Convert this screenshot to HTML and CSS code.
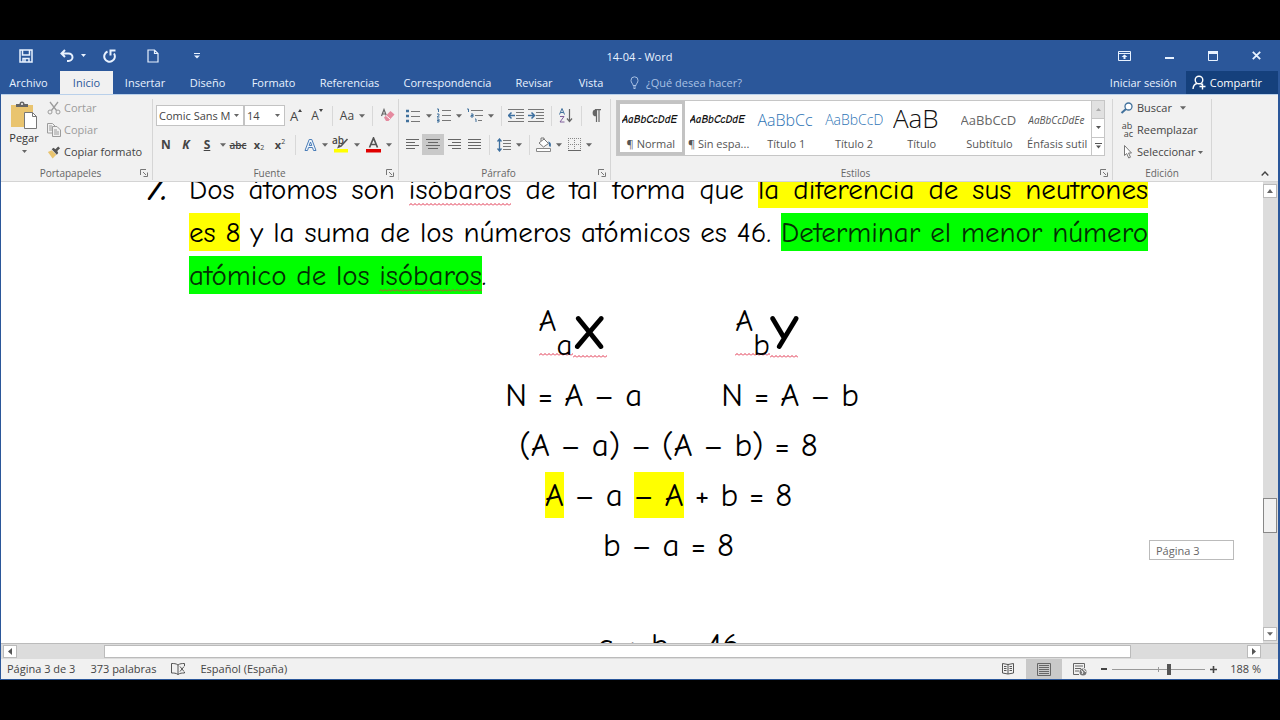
FILE: index.html
```html
<!DOCTYPE html>
<html lang="es">
<head>
<meta charset="utf-8">
<title>14-04 - Word</title>
<link rel="stylesheet" href="styles.css">
</head>
<body>
<svg class="defs" aria-hidden="true">
  <symbol id="car" viewBox="0 0 7 4"><path d="M0 0h7L3.5 4z" fill="currentColor"/></symbol>
  <symbol id="launch" viewBox="0 0 8 8"><path d="M.5 6V.5H6M3 3l3 3M7.500 3.500v4h-4" fill="none" stroke="#777"/></symbol>
</svg>
<div class="app">
  <header class="titlebar">
    <div class="quick">
      <button class="q-save" aria-label="Guardar"><svg width="14" height="14" viewBox="0 0 14 14"><path d="M1 1h12v12H1zM3.500 1v5h7V1M4 13V9.500h6V13M6 10v3" fill="none" stroke="currentColor" stroke-width="1.500"/></svg></button>
      <button class="q-undo" aria-label="Deshacer"><svg width="14" height="13" viewBox="0 0 14 13"><path d="M5 1L1.500 4.500 5 8M2 4.500h6.500a4 3.700 0 0 1 0 7.400H7" fill="none" stroke="currentColor" stroke-width="2"/></svg></button>
      <button class="q-car" aria-label="Opciones de deshacer"><svg width="5" height="3"><use href="#car"/></svg></button>
      <button class="q-redo" aria-label="Repetir"><svg width="14" height="14" viewBox="0 0 14 14"><path d="M4.500 2.500A5.300 5.300 0 1 0 11 4.500M7.500 6.500V1.500h5" fill="none" stroke="currentColor" stroke-width="2"/></svg></button>
      <button class="q-new" aria-label="Nuevo"><svg width="12" height="14" viewBox="0 0 12 14"><path d="M1 1h6.500L11 4.500V13H1zM7.500 1v3.500H11" fill="none" stroke="currentColor" stroke-width="1.200"/></svg></button>
      <button class="q-more" aria-label="Personalizar"><svg width="6" height="6" viewBox="0 0 6 6"><path d="M0 .5h6" stroke="currentColor"/><path d="M0 2.500h6L3 5.500z" fill="currentColor"/></svg></button>
    </div>
    <h1 class="title">14-04 - Word</h1>
    <div class="winbtns">
      <button aria-label="Opciones de la cinta"><svg width="13" height="10" viewBox="0 0 13 10"><path d="M.5.5h12v9H.5zM.5 2.500h12" fill="none" stroke="currentColor"/><path d="M6.500 3.500L9.500 6h-2v2h-2V6h-2z" fill="currentColor"/></svg></button>
      <button aria-label="Minimizar"><svg width="9" height="10" viewBox="0 0 9 10"><path d="M0 7h9" stroke="currentColor" stroke-width="2"/></svg></button>
      <button aria-label="Maximizar"><svg width="10" height="10" viewBox="0 0 10 10"><path d="M.5.5h9v9h-9z" fill="none" stroke="currentColor"/><path d="M0 0h10v3H0z" fill="currentColor"/></svg></button>
      <button aria-label="Cerrar"><svg width="9" height="9" viewBox="0 0 9 9"><path d="M.8.8l7.400 7.400M8.200.8L.8 8.200" stroke="currentColor" stroke-width="1.800"/></svg></button>
    </div>
  </header>
  <nav class="tabs">
    <button class="tab t-file">Archivo</button><button class="tab active">Inicio</button><button class="tab t-ins">Insertar</button><button class="tab t-dis">Diseño</button><button class="tab t-for">Formato</button><button class="tab t-ref">Referencias</button><button class="tab t-cor">Correspondencia</button><button class="tab t-rev">Revisar</button><button class="tab t-vis">Vista</button>
    <button class="tell"><svg width="9" height="13" viewBox="0 0 9 13"><path d="M3 9.500C3 7.500 1 7 1 4.300a3.500 3.500 0 0 1 7 0C8 7 6 7.500 6 9.500zM3 11h3M3.500 12.500h2" fill="none" stroke="currentColor"/></svg>¿Qué desea hacer?</button>
    <button class="signin">Iniciar sesión</button>
    <button class="share"><svg width="14" height="15" viewBox="0 0 14 15"><circle cx="7" cy="5" r="3.800" fill="none" stroke="currentColor" stroke-width="1.400"/><path d="M1 14c.3-3.500 2-5 4-5.500M8.500 8.500l1.500 1M10.500 8.500v6M7.500 11.500h6" fill="none" stroke="currentColor" stroke-width="1.400"/></svg>Compartir</button>
  </nav>

  <section class="ribbon">
    <div class="group g-clip">
      <div class="gbody">
        <button class="paste"><svg width="28" height="29" viewBox="0 0 28 29"><path d="M1 4h22v22H1z" fill="#e9c46f"/><path d="M6 6V3h3.500a2.500 2.500 0 0 1 5 0H18v3z" fill="#666"/><circle cx="12" cy="3" r="1" fill="#fff"/><path d="M14.500 11.500h8l4 4v12h-12z" fill="#fff" stroke="#777"/><path d="M22.500 11.500v4h4" fill="none" stroke="#777"/></svg>Pegar<svg class="car" width="5" height="3"><use href="#car"/></svg></button>
        <div class="list">
          <button class="off"><svg width="14" height="14" viewBox="0 0 14 14"><path d="M3 1l6.500 8.500M11 1L4.500 9.500" stroke="currentColor" stroke-width="1.300"/><circle cx="3" cy="11" r="2" fill="none" stroke="currentColor"/><circle cx="11" cy="11" r="2" fill="none" stroke="currentColor"/></svg>Cortar</button>
          <button class="off"><svg width="14" height="14" viewBox="0 0 14 14"><path d="M5 10H.5V.5h5L8 3M2 3h3M2 5h3M2 7h3M5.500 3.500H10L13.500 7v6.500h-8zM7 7h3M7 9h5M7 11h5" fill="none" stroke="currentColor"/></svg>Copiar</button>
          <button><svg width="14" height="14" viewBox="0 0 15 14"><path d="M1 7l4-2 5 5-4 4z" fill="#e9c46f"/><path d="M5 4l2-1.500 2 1.500L12 1l2 2-3 3 1 2-1.500 2z" fill="#555"/></svg>Copiar formato</button>
        </div>
      </div>
      <div class="glabel"><span>Portapapeles</span><button aria-label="Más opciones de portapapeles"><svg width="8" height="8"><use href="#launch"/></svg></button></div>
    </div>

    <div class="group g-font">
      <div class="gbody rows">
        <div class="row">
          <span class="combo c-font"><select aria-label="Fuente"><option>Comic Sans M</option></select><svg width="5" height="3"><use href="#car"/></svg></span>
          <span class="combo c-size"><select aria-label="Tamaño de fuente"><option>14</option></select><svg width="5" height="3"><use href="#car"/></svg></span>
          <button class="ib wide grow" aria-label="Aumentar tamaño"><b>A</b><svg width="4" height="3" viewBox="0 0 4 3"><path d="M0 3h4L2 0z" fill="#444"/></svg></button>
          <button class="ib grow" aria-label="Disminuir tamaño"><small>A</small><svg width="4" height="3" viewBox="0 0 4 3"><path d="M0 0h4L2 3z" fill="#444"/></svg></button>
          <i class="sep"></i>
          <button class="ib case">Aa</button><button class="cb" aria-label="Opciones de mayúsculas"><svg width="6" height="4"><use href="#car"/></svg></button>
          <i class="sep"></i>
          <button class="ib" aria-label="Borrar formato"><svg width="15" height="15" viewBox="0 0 15 15"><path d="M1.500 8L4 1.500 6.500 8M2.500 6h3" fill="none" stroke="#666" stroke-width="1.200"/><path d="M4 9.500l6.500-6.500 4 3.500-6 6.500H6z" fill="#e58a9f"/><path d="M6 7.500l4 3.500" stroke="#fff"/></svg></button>
        </div>
        <div class="row">
          <button class="ib bius"><b>N</b></button><button class="ib bius"><b><i>K</i></b></button><button class="ib wide bius"><b><u>S</u></b></button><button class="cb" aria-label="Opciones de subrayado"><svg width="6" height="4"><use href="#car"/></svg></button>
          <button class="ib strike"><s>abc</s></button><button class="ib wide script"><b>x</b><sub>2</sub></button><button class="ib script"><b>x</b><sup>2</sup></button><i class="sep"></i>
          <button class="ib" aria-label="Efectos de texto"><svg width="13" height="14" viewBox="0 0 13 14"><path d="M1 12.500L5.200 1.500h2.600L12 12.500H9.500l-1-3h-4l-1 3zM5.200 7.500h2.600L6.500 4z" fill="#eef4fb" stroke="#4a7db8"/></svg></button><button class="cb" aria-label="Opciones de efectos"><svg width="6" height="4"><use href="#car"/></svg></button>
          <button class="ib wide pen" aria-label="Color de resaltado"><span>ab</span><svg width="16" height="16" viewBox="0 0 16 16"><path d="M14.500 2L8 9l-2.500 1 1-2.500" fill="none" stroke="#555" stroke-width="1.600"/><path d="M1 12h14v3.500H1z" fill="#ff0"/></svg></button><button class="cb" aria-label="Opciones de resaltado"><svg width="6" height="4"><use href="#car"/></svg></button>
          <button class="ib wide" aria-label="Color de fuente"><svg width="15" height="16" viewBox="0 0 15 16"><path d="M3.500 10.500l4-9.500 4 9.500M5 7.500h5" fill="none" stroke="#555" stroke-width="1.700"/><path d="M0 12h15v3.500H0z" fill="#e00000"/></svg></button><button class="cb" aria-label="Opciones de color"><svg width="6" height="4"><use href="#car"/></svg></button>
        </div>
      </div>
      <div class="glabel"><span>Fuente</span><button aria-label="Más opciones de fuente"><svg width="8" height="8"><use href="#launch"/></svg></button></div>
    </div>

    <div class="group g-par">
      <div class="gbody rows">
        <div class="row">
          <button class="ib wide" aria-label="Viñetas"><svg width="14" height="14" viewBox="0 0 14 14"><path d="M0 2h3M0 7h3M0 12h3" stroke="#41719c" stroke-width="2.500"/><path d="M5 2.500h9M5 7.500h9M5 12.500h9" stroke="#777"/></svg></button><button class="cb" aria-label="Opciones de viñetas"><svg width="6" height="4"><use href="#car"/></svg></button>
          <button class="ib" aria-label="Numeración"><svg width="14" height="15" viewBox="0 0 14 15"><path d="M0 1h1.500v3M0 6h2v1.500L0 9h2.500M0 11h2v3H0M0 12.500h2" fill="none" stroke="#41719c"/><path d="M5 2.500h9M5 7.500h9M5 12.500h9" stroke="#777"/></svg></button><button class="cb" aria-label="Opciones de numeración"><svg width="6" height="4"><use href="#car"/></svg></button>
          <button class="ib wide" aria-label="Lista multinivel"><svg width="16" height="15" viewBox="0 0 16 15"><path d="M0 1h1.500v3M4 6h2v3H4v-1.500h2M8 11h1v3" fill="none" stroke="#41719c"/><path d="M4 2.500h12M8 7.500h8M11 12.500h4" stroke="#777"/></svg></button><button class="cb" aria-label="Opciones multinivel"><svg width="6" height="4"><use href="#car"/></svg></button>
          <i class="sep"></i>
          <button class="ib" aria-label="Disminuir sangría"><svg width="16" height="13" viewBox="0 0 16 13"><path d="M0 .5h16M8 3.500h8M8 6.500h8M8 9.500h8M0 12.500h16" stroke="#777"/><path d="M0 6.500h7M3.500 3.500l-3 3 3 3" fill="none" stroke="#3d6f9f" stroke-width="1.500"/></svg></button>
          <button class="ib" aria-label="Aumentar sangría"><svg width="16" height="13" viewBox="0 0 16 13"><path d="M0 .5h16M8 3.500h8M8 6.500h8M8 9.500h8M0 12.500h16" stroke="#777"/><path d="M0 6.500h7M3.500 3.500l3 3-3 3" fill="none" stroke="#3d6f9f" stroke-width="1.500"/></svg></button>
          <i class="sep"></i>
          <button class="ib" aria-label="Ordenar"><svg width="14" height="15" viewBox="0 0 14 15"><path d="M.5 6.500L3 .5l2.500 6M1.500 4.500h3" fill="none" stroke="#41719c"/><path d="M1 8.500h4L1 14h4.500" fill="none" stroke="#80609c"/><path d="M10.500 1v12M8 10.500l2.500 3 2.500-3" fill="none" stroke="#666" stroke-width="1.200"/></svg></button>
          <i class="sep"></i>
          <button class="ib" aria-label="Mostrar todo"><svg width="10" height="13" viewBox="0 0 10 13"><path d="M5 .5a3.300 3.300 0 0 0 0 6.800z" fill="#666"/><path d="M4 .7h6M5.500 1v12M8 1v12" stroke="#666" stroke-width="1.200"/></svg></button>
        </div>
        <div class="row">
          <button class="ib" aria-label="Alinear a la izquierda"><svg width="13" height="11" viewBox="0 0 13 11"><path d="M0 .5h13M0 3.500h9M0 6.500h13M0 9.500h9" stroke="#666"/></svg></button>
          <button class="ib wide on" aria-label="Centrar"><svg width="14" height="11" viewBox="0 0 14 11"><path d="M0 .5h14M2 3.500h10M0 6.500h14M2 9.500h10" stroke="#666"/></svg></button>
          <button class="ib" aria-label="Alinear a la derecha"><svg width="13" height="11" viewBox="0 0 13 11"><path d="M0 .5h13M4 3.500h9M0 6.500h13M4 9.500h9" stroke="#666"/></svg></button>
          <button class="ib" aria-label="Justificar"><svg width="13" height="11" viewBox="0 0 13 11"><path d="M0 .5h13M0 3.500h13M0 6.500h13M0 9.500h13" stroke="#666"/></svg></button>
          <i class="sep"></i>
          <button class="ib" aria-label="Espaciado"><svg width="14" height="14" viewBox="0 0 14 14"><path d="M2.500 1v12M.5 3.500L2.500 1l2 2.500M.5 10.500l2 2.500 2-2.500" fill="none" stroke="#3d6f9f" stroke-width="1.300"/><path d="M6 2.500h8M6 5.500h8M6 8.500h8M6 11.500h8" stroke="#777"/></svg></button><button class="cb" aria-label="Opciones de espaciado"><svg width="6" height="4"><use href="#car"/></svg></button>
          <i class="sep"></i>
          <button class="ib" aria-label="Sombreado"><svg width="16" height="15" viewBox="0 0 16 15"><path d="M3 6l5-4 4.500 4.500L7.500 10zM5 4V1h3v2" fill="#fff" stroke="#777"/><path d="M12 4.500c3 .5 3.500 3 2.500 5.500-1.500-.5-2-2-1.500-3.500z" fill="#3d6f9f"/><path d="M.5 11.500h14v3H.5z" fill="#fff" stroke="#888"/></svg></button><button class="cb" aria-label="Opciones de sombreado"><svg width="6" height="4"><use href="#car"/></svg></button>
          <button class="ib" aria-label="Bordes"><svg width="13" height="13" viewBox="0 0 13 13"><path d="M0 .5h13M0 6.500h13M.5 0v13M6.500 0v13M12.500 0v13" stroke="#888" stroke-dasharray="1 1"/><path d="M0 12.500h13" stroke="#666"/></svg></button><button class="cb" aria-label="Opciones de bordes"><svg width="6" height="4"><use href="#car"/></svg></button>
        </div>
      </div>
      <div class="glabel"><span>Párrafo</span><button aria-label="Más opciones de párrafo"><svg width="8" height="8"><use href="#launch"/></svg></button></div>
    </div>

    <div class="group g-sty">
      <div class="gbody">
        <div class="gallery">
          <button class="style sel"><span class="sample comic">AaBbCcDdE</span><span>¶ Normal</span></button>
          <button class="style"><span class="sample comic">AaBbCcDdE</span><span>¶ Sin espa...</span></button>
          <button class="style"><span class="sample h1s">AaBbCc</span><span>Título 1</span></button>
          <button class="style"><span class="sample h2s">AaBbCcD</span><span>Título 2</span></button>
          <button class="style"><span class="sample tts">AaB</span><span>Título</span></button>
          <button class="style"><span class="sample sub">AaBbCcD</span><span>Subtítulo</span></button>
          <button class="style"><span class="sample emp">AaBbCcDdEe</span><span>Énfasis sutil</span></button>
          <div class="gscroll">
            <button class="dis" aria-label="Subir"><svg width="5" height="3" viewBox="0 0 5 3"><path d="M0 3h5L2.500 0z" fill="#aaa"/></svg></button>
            <button aria-label="Bajar"><svg width="5" height="3"><use href="#car"/></svg></button>
            <button aria-label="Más estilos"><svg width="7" height="6" viewBox="0 0 7 6"><path d="M0 .5h7" stroke="#555"/><path d="M1 2.500h5L3.500 5.500z" fill="#555"/></svg></button>
          </div>
        </div>
      </div>
      <div class="glabel"><span>Estilos</span><button aria-label="Más opciones de estilos"><svg width="8" height="8"><use href="#launch"/></svg></button></div>
    </div>

    <div class="group g-edit">
      <div class="gbody">
        <div class="list">
          <button><svg width="14" height="12" viewBox="0 0 14 12"><circle cx="8.500" cy="4.500" r="3.500" fill="#fff" stroke="#41719c" stroke-width="1.300"/><path d="M6 7l-4.500 4" stroke="#41719c" stroke-width="2"/></svg>Buscar<svg class="car gap" width="6" height="4"><use href="#car"/></svg></button>
          <button><span class="abac"><span>ab</span><span>ac</span></span>Reemplazar</button>
          <button><svg width="14" height="14" viewBox="0 0 14 14"><path d="M4.500.5v10l2.200-2 2 4.500 1.800-.8-2-4.200h3z" fill="#fff" stroke="#777"/></svg>Seleccionar<svg class="car" width="5" height="3"><use href="#car"/></svg></button>
        </div>
      </div>
      <div class="glabel"><span>Edición</span></div>
    </div>
    <button class="collapse" aria-label="Contraer la cinta"><svg width="8" height="5" viewBox="0 0 8 5"><path d="M.7 4.500L4 1l3.300 3.500" fill="none" stroke="#444" stroke-width="1.400"/></svg></button>
  </section>

  <main class="work">
    <article class="page">
      <div class="problem">
        <div class="num">7.</div>
        <div class="statement">
          <p class="just">Dos átomos son <span class="sp">isóbaros</span> de tal forma que <mark>la diferencia de sus neutrones</mark></p>
          <p class="just"><mark>es 8</mark> y la suma de los números atómicos es 46. <mark class="green">Determinar el menor número</mark></p>
          <p><mark class="green">atómico de los <span class="sp">isóbaros</span></mark>.</p>
          <div class="math nuclides"><span class="nuc"><span class="idx sp"><sup>A</sup><sub>a</sub></span><span class="el sp">X</span></span><span class="nuc"><span class="idx sp"><sup>A</sup><sub>b</sub></span><span class="el sp">Y</span></span></div>
          <div class="math pair"><span>N = A – a</span><span>N = A – b</span></div>
          <p class="math">(A – a) – (A – b) = 8</p>
          <p class="math"><mark>A</mark> – a <mark>– A</mark> + b = 8</p>
          <p class="math">b – a = 8</p>
          <p class="math">&nbsp;</p>
          <p class="math">a + b = 46</p>
        </div>
      </div>
    </article>
    <div class="vscroll">
      <button aria-label="Desplazar arriba"><svg width="6" height="4" viewBox="0 0 6 4"><path d="M0 4h6L3 0z" fill="#666"/></svg></button>
      <div class="track"><div class="thumb"></div></div>
      <button aria-label="Desplazar abajo"><svg width="6" height="4"><use href="#car"/></svg></button>
    </div>
    <div class="tip">Página 3</div>
  </main>
  <div class="hscroll">
    <button aria-label="Desplazar a la izquierda"><svg width="4" height="7" viewBox="0 0 4 7"><path d="M4 0v7L0 3.500z" fill="#555"/></svg></button>
    <div class="htrack"><div class="hthumb"></div></div>
    <button aria-label="Desplazar a la derecha"><svg width="4" height="7" viewBox="0 0 4 7"><path d="M0 0v7l4-3.500z" fill="#555"/></svg></button>
  </div>
  <footer class="status">
    <span>Página 3 de 3</span><span>373 palabras</span>
    <button aria-label="Revisión"><svg width="14" height="12" viewBox="0 0 14 12"><path d="M7 2C5 .5 3 .5.500.500v9.500C3 10 5 10 7 11.500zM7 2C9 .5 11 .5 13.500.5V3M7 11.500C9 10 11 10 13.500 10V9M9 3.500l4 5M13 3.500l-4 5" fill="none" stroke="#555"/></svg></button>
    <span>Español (España)</span>
    <div class="views">
      <button aria-label="Modo de lectura"><svg width="12" height="12" viewBox="0 0 12 12"><path d="M6 1.500L.5.500v9.500L6 11l5.500-1V.5zM6 1v10M2 3.500h2.500M2 5.500h2.500M2 7.500h2.500M7.500 3.500H10M7.500 5.500H10M7.500 7.500H10" fill="none" stroke="#555"/></svg></button>
      <button class="on" aria-label="Diseño de impresión"><svg width="14" height="13" viewBox="0 0 14 13"><path d="M.5.5h13v12H.5zM2 2.500h10M2 4.500h10M2 6.500h10M2 8.500h10M2 10.500h10" fill="none" stroke="#666"/></svg></button>
      <button aria-label="Diseño web"><svg width="14" height="13" viewBox="0 0 14 13"><path d="M6 11.500H.5V.5h11V5M2 3h8M2 5.500h6M2 8h4" fill="none" stroke="#666"/><circle cx="10" cy="9" r="3.500" fill="#777"/><path d="M8 7.500l2 1.500-1 2M10.500 6l1 2 1.500.5" fill="none" stroke="#fff"/></svg></button>
    </div>
    <div class="zoom">
      <button aria-label="Alejar"><svg width="6" height="2"><path d="M0 1h6" stroke="#444" stroke-width="2"/></svg></button>
      <input type="range" min="0" max="100" value="62" aria-label="Zoom">
      <button aria-label="Acercar"><svg width="7" height="7"><path d="M0 3.500h7M3.500 0v7" stroke="#444" stroke-width="1.600"/></svg></button>
      <button class="pct">188 %</button>
    </div>
  </footer>
</div>
</body>
</html>
```
FILE: styles.css
```css
* { box-sizing: border-box; }
body {
  margin: 0;
  height: 100vh;
  padding: 40px 0;
  background: #000;
  font: 11px/16px "Open Sans", "Noto Sans", sans-serif;
  color: #444;
}
button {
  padding: 0;
  border: 0;
  background: none;
  font: inherit;
  color: inherit;
  white-space: nowrap;
}
svg { display: block; flex: none; }
p { margin: 0; }
.defs { position: absolute; width: 0; height: 0; }

.app {
  height: 100%;
  display: flex;
  flex-direction: column;
  background: #f1f1f1;
  border: solid #2b579a;
  border-width: 0 2px 1px 1px;
  overflow: hidden;
}

/* title bar */
.titlebar {
  flex: none;
  height: 31px;
  display: grid;
  grid-template-columns: 1fr auto 1fr;
  align-items: center;
  background: #2b579a;
  color: #e8f2ff;
}
.quick { display: flex; align-items: center; padding-left: 18px; }
.q-undo { margin-left: 27px; }
.q-car { margin-left: 7px; }
.q-redo { margin-left: 17px; }
.q-new { margin-left: 30px; }
.q-more { margin-left: 35px; }
.title { margin: 3px 0 0; font-size: 11px; font-weight: 400; }
.winbtns { display: flex; justify-content: flex-end; gap: 34px; padding-right: 17px; }

/* tabs */
.tabs {
  flex: none;
  height: 23px;
  display: flex;
  align-items: stretch;
  background: #2b579a;
  color: #e8f2ff;
}
.t-file { width: 59px; padding-right: 4px; }
.active { width: 53px; background: #f1f1f1; color: #2b579a; }
.t-ins { width: 64px; }
.t-dis { width: 61px; }
.t-for { width: 71px; }
.t-ref { width: 81px; }
.t-cor { width: 115px; }
.t-rev { width: 58px; }
.t-vis { width: 56px; }
.tell { display: flex; align-items: center; gap: 7px; margin-left: 11px; color: #a9c1e4; }
.signin { margin-left: auto; }
.share { display: flex; align-items: center; gap: 4px; margin-left: 9px; padding: 0 16px 0 6px; background: #15407c; color: #fff; }

/* ribbon */
.ribbon {
  flex: none;
  height: 88px;
  display: flex;
  border-top: 1px solid #b9d0ea;
  border-bottom: 1px solid #d4d4d4;
}
.group { display: flex; flex-direction: column; margin: 4px 0 1px; border-right: 1px solid #d6d6d6; }
.gbody { height: 66px; display: flex; }
.glabel { display: flex; align-items: center; height: 15px; color: #666; font-size: 10px; }
.glabel span { flex: 1; text-align: center; }
.glabel button { margin-right: 4px; }
.g-clip { width: 152px; }
.g-font { width: 246px; }
.g-par { width: 212px; }
.g-sty { flex: 1; }
.g-edit { width: 99px; }
.paste { width: 46px; display: flex; flex-direction: column; align-items: center; margin-top: 2px; padding-bottom: 4px; color: #333; }
.paste .car { margin-top: 4px; }
.car { color: #666; }
.list { display: flex; flex-direction: column; }
.list button { height: 22px; display: flex; align-items: center; gap: 3px; color: #444; padding-bottom: 4px; }
.list .off { color: #9c9c9c; }
.list button .gap { margin-left: 5px; }
.g-edit .list { padding-left: 7px; }
.abac { width: 14px; display: flex; flex-direction: column; font-size: 9px; line-height: 8px; }
.abac span + span { padding-left: 3px; }

.rows { flex-direction: column; padding: 6px 0 0 3px; gap: 8px; }
.row { display: flex; align-items: center; height: 21px; }
.combo { position: relative; height: 21px; display: flex; align-items: center; border: 1px solid #c3c3c3; background: #fff; }
.combo select { appearance: none; width: 100%; border: 0; padding: 0 12px 0 2px; background: none; font: inherit; color: #444; }
.combo svg { position: absolute; right: 4px; color: #666; }
.c-font { width: 88px; }
.c-size { width: 41px; }
.ib { width: 20px; height: 21px; display: flex; align-items: center; justify-content: center; }
.ib.wide { width: 22px; }
.ib.on { background: #c9c9c9; }
.cb { width: 10px; height: 21px; display: flex; align-items: center; justify-content: center; color: #666; }
.sep { width: 10px; height: 20px; background: linear-gradient(#d8d8d8, #d8d8d8) center / 1px 100% no-repeat; }
.grow b { font-size: 13px; font-weight: 500; }
.grow small { font-size: 12px; }
.grow svg { margin-bottom: 10px; }
.case { font-size: 12px; }
.bius { font-size: 12px; }
.strike { font-size: 10px; font-weight: 600; }
.script sub, .script sup { font-size: 7px; line-height: 8px; }
.script sub { margin-top: 6px; }
.script sup { margin-bottom: 6px; }
.pen { position: relative; }
.pen span { position: absolute; left: 2px; top: 0; font-size: 10px; line-height: 12px; font-weight: 600; }

/* style gallery */
.gallery { flex: 1; display: flex; height: 56px; margin: 1px 7px 0 5px; border: 1px solid #c6c6c6; background: #fff; }
.style { flex: 1 1 0; min-width: 0; display: flex; flex-direction: column; padding: 3px 5px; align-items: center; color: #555; }
.style.sel { padding: 0 2px; border: 3px solid #c3c3c3; }
.sample { width: 100%; height: 32px; line-height: 32px; overflow: hidden; text-align: left; }
.comic { font-family: "Comic Sans MS", "Comic Neue", "Open Sans", sans-serif; font-size: 11px; font-weight: 700; font-style: italic; color: #111; }
.h1s { font-size: 16px; font-weight: 300; color: #2e74b5; }
.h2s { font-size: 14px; font-weight: 300; color: #2e74b5; }
.tts { font-size: 26px; font-weight: 300; color: #111; line-height: 28px; }
.sub { font-size: 13px; color: #666; }
.emp { font-size: 10px; font-style: italic; color: #555; }
.gscroll { width: 13px; display: flex; flex-direction: column; border-left: 1px solid #c6c6c6; }
.gscroll button { flex: 1; display: flex; align-items: center; justify-content: center; border-bottom: 1px solid #c6c6c6; color: #555; }
.gscroll button:last-child { border-bottom: 0; }
.gscroll .dis { background: #e1e1e1; }
.collapse { width: 66px; display: flex; align-items: flex-end; justify-content: flex-end; padding: 0 9px 5px 0; }

/* document */
.work { position: relative; flex: 1; min-height: 0; display: flex; background: #fff; }
.page { flex: 1; overflow: hidden; font-family: "Comic Sans MS", "Comic Neue", "Noto Sans", sans-serif; color: #000; }
.problem { display: flex; margin: -14px 115px 0 146px; font-size: 29px; line-height: 43px; }
.num { width: 42px; flex: none; font-size: 32px; font-weight: 700; font-style: italic; }
.statement { flex: 1; }
.statement p { white-space: nowrap; }
.statement .just { text-align: justify; text-align-last: justify; white-space: normal; }
mark { padding: 3px 0 2px; background: #ff0; color: inherit; }
.math mark { padding: 4px 0; }
.green { background: #0f0; color: #042f04; }
.sp { background: url("data:image/svg+xml,%3Csvg xmlns='http://www.w3.org/2000/svg' width='4' height='3'%3E%3Cpath d='M0 2.500L2 .5l2 2' fill='none' stroke='%23e0304a'/%3E%3C/svg%3E") left bottom repeat-x; }
.math { height: 50px; line-height: 50px; font-size: 33px; text-align: center; }
.nuclides { display: flex; justify-content: center; gap: 128px; height: 73px; line-height: 72px; }
.nuc { display: flex; align-items: flex-start; }
.idx { display: flex; height: 59px; }
.idx sup, .idx sub { font-size: 31px; line-height: 48px; }
.idx sub { margin-top: 24px; }
.el { height: 61px; font-size: 49px; font-weight: 700; }
.pair { display: flex; justify-content: center; gap: 79px; padding-left: 27px; }

.vscroll { width: 15px; display: flex; flex-direction: column; padding: 2px 1px 2px 0; background: #dcdcdc; }
.vscroll button { height: 14px; display: flex; align-items: center; justify-content: center; border: 1px solid #bbb; background: #fff; color: #666; }
.track { flex: 1; display: flex; flex-direction: column; }
.track::before { content: ""; flex: 300 0 0; }
.track::after { content: ""; flex: 94 0 0; }
.thumb { height: 35px; border: 1px solid #888; background: #f1f1f1; }
.tip { position: absolute; right: 44px; bottom: 83px; width: 85px; height: 20px; padding-left: 6px; border: 1px solid #bbb; background: #fff; line-height: 20px; color: #666; }

.hscroll { flex: none; height: 16px; display: flex; padding: 1px 17px 1px 2px; background: #dcdcdc; border-top: 1px solid #bbb; }
.hscroll button { width: 14px; display: flex; align-items: center; justify-content: center; border: 1px solid #bbb; background: #fff; }
.htrack { flex: 1; display: flex; }
.htrack::before { content: ""; flex: 87 0 0; }
.htrack::after { content: ""; flex: 116 0 0; }
.hthumb { flex: 1026 0 0; border: 1px solid #bbb; background: #fff; }

.status { flex: none; height: 20px; display: flex; align-items: center; gap: 15px; padding: 0 17px 0 6px; }
.views { display: flex; align-self: stretch; margin-left: auto; }
.views button { width: 36px; display: flex; align-items: center; justify-content: center; }
.views .on { background: #c9c9c9; }
.zoom { display: flex; align-items: center; gap: 5px; margin-left: -12px; }
.zoom input { appearance: none; width: 93px; height: 14px; margin: 0; background: linear-gradient(#999, #999) 0 center / 100% 1px no-repeat, linear-gradient(#999, #999) center / 1px 5px no-repeat; }
.zoom input::-webkit-slider-thumb { appearance: none; width: 4px; height: 11px; background: #555; }
.pct { margin-left: 8px; }
```
